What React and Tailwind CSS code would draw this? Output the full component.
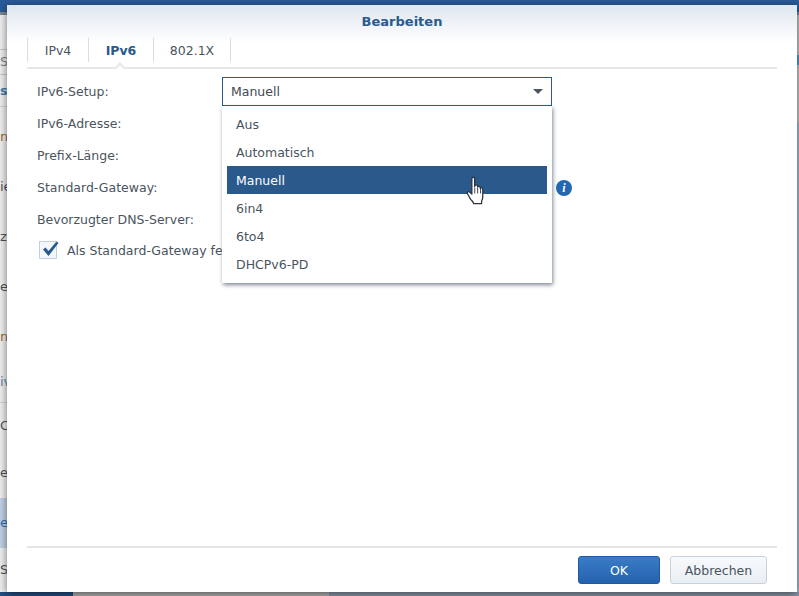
import React from "react";

const sideRows = [
  { h: "h-[26px]", text: "Su", cls: "text-[#7b8794] border-y border-[#c9c9c9]" },
  { h: "h-[32px]", text: "sa", cls: "text-[#3d7fb5] font-bold border-b border-[#d5d5d5]" },
  { h: "h-[5px]", text: "", cls: "" },
  { h: "h-[50px]", text: "n", cls: "text-[#9a6a3a]" },
  { h: "h-[50px]", text: "ie", cls: "text-[#4b5563]" },
  { h: "h-[50px]", text: "z", cls: "text-[#4b5563]" },
  { h: "h-[50px]", text: "e", cls: "text-[#4b5563]" },
  { h: "h-[50px]", text: "n", cls: "text-[#9a6a3a]" },
  { h: "h-[41px]", text: "iv", cls: "text-[#5b86ad] border-b border-[#d5d5d5]" },
  { h: "h-[45px]", text: "Co", cls: "text-[#4b5563]" },
  { h: "h-[50px]", text: "e", cls: "text-[#4b5563]" },
  { h: "h-[50px]", text: "e", cls: "text-[#2a6fb5] bg-[#c3d5e8]" },
  { h: "h-[44px]", text: "S", cls: "text-[#4b5563]" },
];

const fields = ["IPv6-Adresse:", "Prefix-Länge:", "Standard-Gateway:", "Bevorzugter DNS-Server:"];
const options = ["Aus", "Automatisch", "Manuell", "6in4", "6to4", "DHCPv6-PD"];

function HandCursor() {
  return (
    <svg width="21" height="29" viewBox="0 0 18 25" className="absolute left-[244px] top-[99px] z-20">
      <path
        d="M5 2.2c0-1.5 2.4-1.5 2.4 0v7l.3-1c.5-1 2.1-.8 2.2.4l.1.9c.5-1 2.1-.8 2.2.4l.1.8c.6-.8 2.1-.5 2.1.7v6.8c0 1.6-.5 2.6-1 3.4v2.3H6.6c-.4-1.600-1.500-2.400-2.600-3.800L1.300 15.500c-.9-1.300.7-2.700 2-1.500L5 15.600z"
        fill="#fff"
        stroke="#2c3440"
        strokeWidth="1.100"
        strokeLinejoin="round"
      />
      <path d="M7.500 10v5M10 10v5M12.500 10.500v4.500" stroke="#2c3440" strokeWidth=".8" fill="none" />
    </svg>
  );
}

export default function App() {
  return (
    <div className="relative w-[799px] h-[596px] overflow-hidden bg-[#f2f2f2] font-['DejaVu_Sans',sans-serif] text-[12.5px] text-[#4a5460]">
      {/* desktop behind the dialog */}
      <div className="flex flex-col h-full">
        <div className="h-[12px] bg-[#2a5b9a]" />
        <div className="h-[3px] bg-[#7d8791]" />
        <div className="flex flex-1 justify-between">
          <div className="flex flex-col w-[40px] pt-[34px]">
            {sideRows.map((row, i) => (
              <div key={i} className={`${row.h} ${row.cls} flex items-center whitespace-nowrap text-[13px]`}>
                {row.text}
              </div>
            ))}
          </div>
          <div className="flex flex-col w-[2px]">
            <div className="h-[40px] bg-[#c8c8c8]" />
            <div className="h-[10px] bg-[#5d9ccf]" />
            <div className="h-[58px] bg-[#c8c8c8]" />
            <div className="flex-1 bg-[#a9bdd3]" />
          </div>
        </div>
        <div className="flex h-[4px]">
          <div className="w-[73px] bg-[#234f86]" />
          <div className="w-[256px] bg-[#b4b4b4]" />
          <div className="flex-1 bg-[#8c9aaa]" />
        </div>
      </div>

      {/* dialog */}
      <div className="absolute left-[7px] top-[5px] w-[790px] h-[587px] flex flex-col bg-gradient-to-b from-[#dfe6f0] to-white to-[38px] shadow-[0_2px_9px_rgba(0,0,0,0.55)]">
        <div className="h-[33px] flex items-center justify-center font-bold text-[13px] text-[#2a5a8c]">Bearbeiten</div>

        <div className="relative mx-[20px] h-[31px] border-b-2 border-[#e6e6e6]">
          <div className="flex h-[24px] w-fit border-r border-[#d6dee8]">
            <div className="w-[61px] pt-[2px] flex items-center justify-center border-l border-[#d6dee8]">IPv4</div>
            <div className="w-[65px] pt-[2px] flex items-center justify-center border-l border-[#d6dee8] font-bold text-[#2a5a8c]">IPv6</div>
            <div className="w-[77px] pt-[2px] flex items-center justify-center border-l border-[#d6dee8]">802.1X</div>
          </div>
          <div className="absolute left-[89px] top-[26px] w-[8px] h-[8px] rotate-45 bg-white border-l-2 border-t-2 border-[#e6e6e6]" />
        </div>

        <div className="relative mx-[30px] mt-[6px]">
          <div className="flex items-center h-[32px]">
            <div className="w-[185px] pt-[2px]">IPv6-Setup:</div>
            <div className="relative w-[330px]">
              <div className="h-[29px] flex items-center justify-between border border-[#2a5a8c] pl-[8px] pr-[8px] bg-white text-[#3f4954]">
                <span className="pt-[2px]">Manuell</span>
                <span className="w-0 h-0 border-x-[5px] border-x-transparent border-t-[5px] border-t-[#4d5660]" />
              </div>
              <div className="absolute top-full left-0 w-full h-[177px] z-10 bg-white pt-[4px] px-[5px] shadow-[1px_2px_4px_rgba(60,75,95,0.65)]">
                {options.map((o) => (
                  <div key={o} className={`h-[28px] pt-[4px] flex items-center pl-[9px] ${o === "Manuell" ? "bg-[#2a5a8c] text-white" : ""}`}>
                    {o}
                  </div>
                ))}
              </div>
              <HandCursor />
            </div>
          </div>

          {fields.map((f) => (
            <div key={f} className="flex items-center h-[32px]">
              <div className="w-[185px] pt-[2px]">{f}</div>
              <div className="w-[330px] h-[28px] border border-[#c8d2dd]" />
              {f === "Standard-Gateway:" && (
                <div className="ml-[4px] mt-[2px] w-[16px] h-[16px] rounded-full bg-[#2468b0] flex items-center justify-center text-white font-['Liberation_Serif',serif] italic font-bold text-[12px] leading-none">
                  i
                </div>
              )}
            </div>
          ))}

          <div className="flex items-center h-[30px] pl-[2px]">
            <div className="relative w-[18px] h-[18px] border border-[#c3cfdd] bg-[#f3f6fa]">
              <svg width="20" height="18" viewBox="0 0 20 18" className="absolute left-[0px] top-[-2px]">
                <path d="M3 9.500l2.500-2 3 3.500L16.500 1.500l2 1.500L8.500 16z" fill="#2a5a8c" />
              </svg>
            </div>
            <span className="ml-[10px] pt-[2px]">Als Standard-Gateway festlegen</span>
          </div>
        </div>

        <div className="mt-auto mx-[20px] h-[46px] border-t-2 border-[#e6e6e6] flex justify-end items-start gap-[10px] pt-[8px] pr-[10px]">
          <button className="w-[82px] h-[28px] pt-[2px] rounded-[3px] border border-[#1f5aa0] bg-gradient-to-b from-[#3b7cc6] to-[#2462ae] text-white">OK</button>
          <button className="w-[97px] h-[28px] pt-[2px] rounded-[3px] border border-[#c8d2dd] bg-gradient-to-b from-[#f8fafc] to-[#e9eef3] text-[#4a5460]">Abbrechen</button>
        </div>
      </div>
    </div>
  );
}
